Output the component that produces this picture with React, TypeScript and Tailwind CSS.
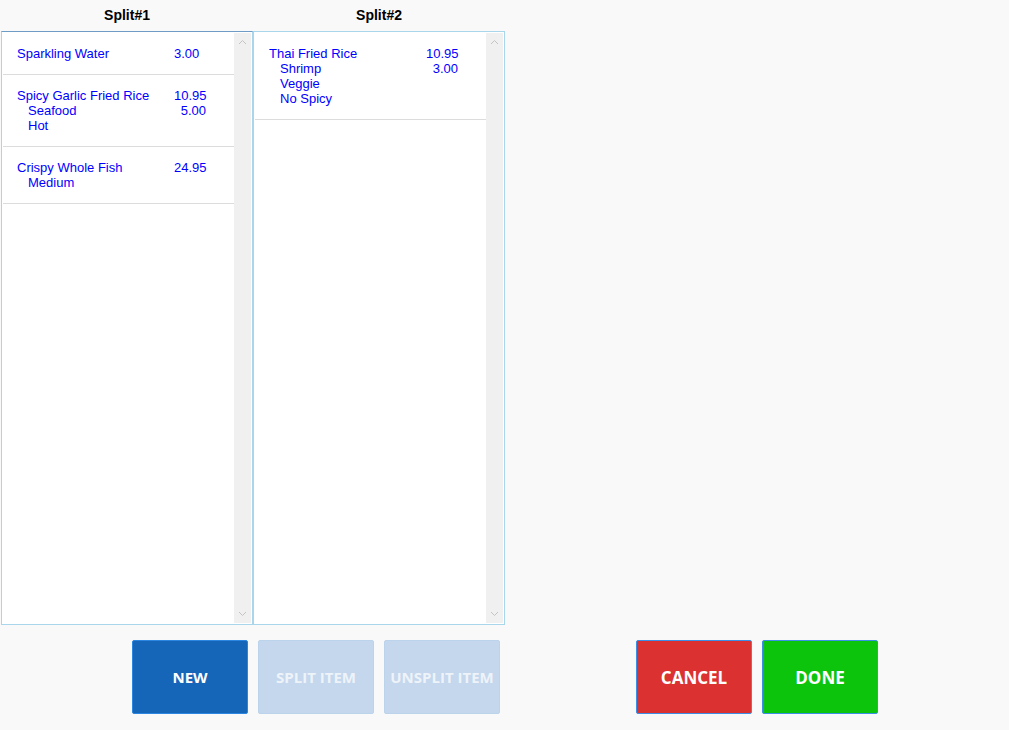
import React from "react";

type Mod = { name: string; price?: string };
type Item = { name: string; price: string; mods: Mod[] };

const split1: Item[] = [
  { name: "Sparkling Water", price: "3.00", mods: [] },
  {
    name: "Spicy Garlic Fried Rice",
    price: "10.95",
    mods: [{ name: "Seafood", price: "5.00" }, { name: "Hot" }],
  },
  { name: "Crispy Whole Fish", price: "24.95", mods: [{ name: "Medium" }] },
];

const split2: Item[] = [
  {
    name: "Thai Fried Rice",
    price: "10.95",
    mods: [{ name: "Shrimp", price: "3.00" }, { name: "Veggie" }, { name: "No Spicy" }],
  },
];

const Chevron = ({ up }: { up?: boolean }) => (
  <svg width="9" height="6" viewBox="0 0 9 6" className="text-[#c4c4c4]">
    <path
      d={up ? "M1 5 L4.5 1.5 L8 5" : "M1 1 L4.5 4.5 L8 1"}
      fill="none"
      stroke="currentColor"
      strokeWidth="1"
    />
  </svg>
);

const ItemRow = ({ item }: { item: Item }) => (
  <div className="border-b border-[#dcdcdc] pt-[13px] pb-[13px] pl-[14px] text-[13px] leading-[15px] text-[#0000ff]">
    <div className="flex">
      <span className="w-[157px]">{item.name}</span>
      <span>{item.price}</span>
    </div>
    {item.mods.map((m, i) => (
      <div key={i} className="flex w-[189px] justify-between pl-[11px]">
        <span>{m.name}</span>
        <span>{m.price}</span>
      </div>
    ))}
  </div>
);

const SplitPanel = ({ title, items, focused }: { title: string; items: Item[]; focused?: boolean }) => (
  <div className="flex w-[252px] flex-col">
    <div className="flex h-[31px] items-center justify-center text-[14px] font-bold text-black">{title}</div>
    <div
      className={
        focused
          ? "flex h-[594px] border border-[#a9d6ea] border-t-[#6f9cc6] p-px bg-white"
          : "flex h-[594px] border border-[#a9d6ea] p-px bg-white"
      }
    >
      <div className="flex-1">
        {items.map((it, i) => (
          <ItemRow key={i} item={it} />
        ))}
      </div>
      <div className="flex w-[17px] flex-col items-center justify-between bg-[#f0f0f0] py-[6px]">
        <Chevron up />
        <Chevron />
      </div>
    </div>
  </div>
);

const Btn = ({ label, cls }: { label: string; cls: string }) => (
  <button
    className={
      "flex h-[74px] w-[116px] items-center justify-center rounded-[2px] pt-px font-bold " + cls
    }
    style={{ fontFamily: '"Open Sans", sans-serif' }}
  >
    {label}
  </button>
);

export default function App() {
  return (
    <div
      className="h-[730px] w-[1009px] bg-[#f9f9f9] pl-px"
      style={{ fontFamily: '"Liberation Sans", Arial, sans-serif' }}
    >
      <div className="flex">
        <SplitPanel title="Split#1" items={split1} focused />
        <SplitPanel title="Split#2" items={split2} />
      </div>
      <div className="mt-[15px] flex">
        <div className="ml-[131px] flex gap-[10px]">
          <Btn label="NEW" cls="bg-[#1565b9] border border-[#2a86e0] text-white text-[15px]" />
          <Btn label="SPLIT ITEM" cls="bg-[#c4d7ec] border border-[#bcd3ec] text-[#eef3f9] text-[15px]" />
          <Btn label="UNSPLIT ITEM" cls="bg-[#c4d7ec] border border-[#bcd3ec] text-[#eef3f9] text-[15px]" />
        </div>
        <div className="ml-[136px] flex gap-[10px]">
          <Btn label="CANCEL" cls="bg-[#dc3131] border border-[#3b8fe6] text-white text-[17px]" />
          <Btn label="DONE" cls="bg-[#0cc40c] border border-[#3b8fe6] text-white text-[17px]" />
        </div>
      </div>
    </div>
  );
}
